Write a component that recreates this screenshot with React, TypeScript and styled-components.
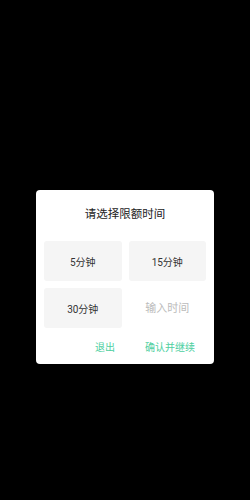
import React, { useState } from "react";
import styled, { createGlobalStyle } from "styled-components";

const GlobalStyle = createGlobalStyle`
  html, body {
    margin: 0;
    padding: 0;
    background: #000;
  }
  body {
    font-family: Roboto, "Noto Sans CJK SC", sans-serif;
  }
`;

const Page = styled.div`
  width: 250px;
  height: 500px;
  background: #000;
  display: flex;
  flex-direction: column;
  align-items: center;
  padding-top: 190px;
  box-sizing: border-box;
`;

const Dialog = styled.div`
  width: 178px;
  background: #fff;
  border-radius: 4px;
  box-sizing: border-box;
  padding: 0 8px;
`;

const Title = styled.div`
  padding-top: 16px;
  height: 16px;
  line-height: 16px;
  text-align: center;
  font-size: 11.5px;
  color: #222;
  margin-bottom: 19px;
`;

const Grid = styled.div`
  display: grid;
  grid-template-columns: 1fr 1fr;
  grid-auto-rows: 40px;
  gap: 7px;
`;

const Option = styled.button<{ active: boolean }>`
  border: none;
  border-radius: 3px;
  background: ${({ active }) => (active ? "#e6f8f1" : "#f5f5f5")};
  color: #333;
  font-family: inherit;
  font-size: 10px;
  padding: 0;
  cursor: pointer;
`;

const TimeInput = styled.input`
  border: none;
  outline: none;
  background: transparent;
  text-align: center;
  font-family: inherit;
  font-size: 11px;
  color: #333;
  width: 100%;
  padding: 0;

  &::placeholder {
    color: #bbb;
  }
`;

const Footer = styled.div`
  height: 36px;
  display: flex;
  justify-content: flex-end;
  align-items: center;
  gap: 30px;
  padding-right: 11px;
`;

const TextButton = styled.button`
  border: none;
  background: none;
  padding: 0;
  font-family: inherit;
  font-size: 10px;
  color: #4ecf9f;
  cursor: pointer;
`;

const options = ["5分钟", "15分钟", "30分钟"];

const App = () => {
  const [selected, setSelected] = useState("");
  const [custom, setCustom] = useState("");

  return (
    <>
      <GlobalStyle />
      <Page>
        <Dialog>
          <Title>请选择限额时间</Title>
          <Grid>
            {options.map((item) => (
              <Option
                key={item}
                active={selected === item}
                onClick={() => setSelected(item)}
              >
                {item}
              </Option>
            ))}
            <TimeInput
              value={custom}
              onChange={(e) => setCustom(e.target.value)}
              placeholder="输入时间"
            />
          </Grid>
          <Footer>
            <TextButton>退出</TextButton>
            <TextButton>确认并继续</TextButton>
          </Footer>
        </Dialog>
      </Page>
    </>
  );
};

export default App;
